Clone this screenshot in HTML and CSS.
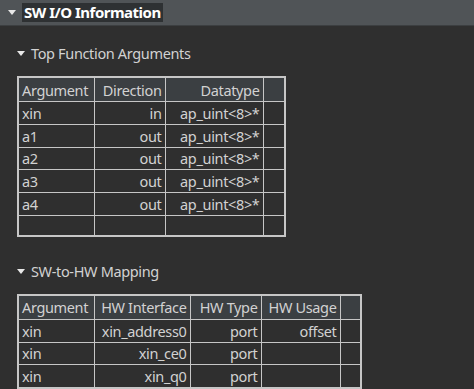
FILE: index.html
```html
<!DOCTYPE html>
<html lang="en">
<head>
  <meta charset="UTF-8" />
  <title>SW I/O Information</title>
  <link rel="stylesheet" href="styles.css">
</head>
<body>
  <div class="panel-header">
    <span class="caret"></span>
    <span class="panel-title">SW I/O Information</span>
  </div>

  <div class="section">
    <div class="section-title"><span class="caret small"></span>Top Function Arguments</div>
    <table class="grid args">
      <colgroup>
        <col style="width: 76px"><col style="width: 71px"><col style="width: 98px"><col style="width: 22px">
      </colgroup>
      <tr>
        <th class="left">Argument</th>
        <th>Direction</th>
        <th>Datatype</th>
        <th></th>
      </tr>
      <tr><td class="left">xin</td><td>in</td><td>ap_uint&lt;8&gt;*</td><td></td></tr>
      <tr><td class="left">a1</td><td>out</td><td>ap_uint&lt;8&gt;*</td><td></td></tr>
      <tr><td class="left">a2</td><td>out</td><td>ap_uint&lt;8&gt;*</td><td></td></tr>
      <tr><td class="left">a3</td><td>out</td><td>ap_uint&lt;8&gt;*</td><td></td></tr>
      <tr><td class="left">a4</td><td>out</td><td>ap_uint&lt;8&gt;*</td><td></td></tr>
      <tr class="empty"><td></td><td></td><td></td><td></td></tr>
    </table>
  </div>

  <div class="section">
    <div class="section-title"><span class="caret small"></span>SW-to-HW Mapping</div>
    <table class="grid mapping">
      <colgroup>
        <col style="width: 76px"><col style="width: 96px"><col style="width: 71px"><col style="width: 79px"><col style="width: 21px">
      </colgroup>
      <tr>
        <th class="left">Argument</th>
        <th>HW Interface</th>
        <th>HW Type</th>
        <th>HW Usage</th>
        <th></th>
      </tr>
      <tr><td class="left">xin</td><td>xin_address0</td><td>port</td><td>offset</td><td></td></tr>
      <tr><td class="left">xin</td><td>xin_ce0</td><td>port</td><td></td><td></td></tr>
      <tr><td class="left">xin</td><td>xin_q0</td><td>port</td><td></td><td></td></tr>
    </table>
  </div>
</body>
</html>
```

FILE: styles.css
```css
body {
  margin: 0;
  background: #2f2f2f;
  color: #d2d2d2;
  font-family: "Noto Sans", "Open Sans", sans-serif;
  font-size: 14.5px;
  letter-spacing: -0.35px;
  overflow: hidden;
}
.panel-header {
  height: 25px;
  background: #505457;
  border-bottom: 1px solid #3c3f41;
  display: flex;
  align-items: center;
  padding-left: 8px;
}
.caret {
  width: 0;
  height: 0;
  border-left: 4px solid transparent;
  border-right: 4px solid transparent;
  border-top: 5px solid #e8e8e8;
  margin-right: 6px;
}
.caret.small {
  display: inline-block;
  vertical-align: middle;
  margin-right: 6px;
  margin-top: -3px;
}
.panel-title {
  font-weight: bold;
  font-size: 15px;
  letter-spacing: -0.5px;
  color: #ffffff;
  background: #2e3133;
  padding: 0 2px;
  line-height: 19px;
}
.section {
  padding-left: 17px;
}
.section-title {
  margin-top: 16px;
  height: 22px;
  line-height: 22px;
  margin-bottom: 12px;
}
.section + .section .section-title {
  margin-top: 23px;
}
.grid {
  border-collapse: collapse;
  table-layout: fixed;
  border: 2px solid #c6c6c6;
}
.args { width: 267px; }
.mapping { width: 343px; }
.grid th,
.grid td {
  border: 1px solid #c6c6c6;
  height: 21.75px;
  padding: 0 3px;
  text-align: right;
  font-weight: normal;
  white-space: nowrap;
  overflow: hidden;
}
.grid th {
  background: #3b3f42;
  height: 23px;
}
.grid .left {
  text-align: left;
}
.grid .empty td {
  height: 19px;
}
```
